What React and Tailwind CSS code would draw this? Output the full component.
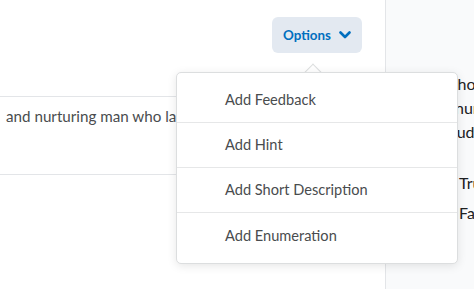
import React from 'react'

const items = ['Add Feedback', 'Add Hint', 'Add Short Description', 'Add Enumeration']

const Chevron = () => (
  <svg width="12" height="8" viewBox="0 0 12 8" fill="none">
    <path d="M1.5 1.5 L6 6 L10.5 1.5" stroke="#006fbf" strokeWidth="2.6" strokeLinecap="round" strokeLinejoin="round" />
  </svg>
)

const OptionsMenu = () => (
  <div className="absolute left-[176px] top-[72px] w-[282px]">
    {/* arrow */}
    <div className="absolute left-[131px] top-[-6px] w-[12px] h-[12px] rotate-45 bg-white border-l border-t border-[#dcdedf]" />
    <div className="relative rounded-[5px] bg-white border border-[#dcdedf] shadow-[0_2px_10px_rgba(0,0,0,0.10)] py-[5px]">
      {items.map((item, i) => (
        <div
          key={item}
          className={`h-[45px] flex items-center pl-[48px] text-[14.6px] text-[#494c4e] ${i < items.length - 1 ? 'border-b border-[#e6e7e8]' : ''}`}
        >
          {item}
        </div>
      ))}
    </div>
  </div>
)

export default function App() {
  return (
    <div className="relative w-[474px] h-[289px] overflow-hidden flex bg-white font-['Lato','Liberation_Sans',sans-serif]">
      {/* main column */}
      <div className="w-[386px] shrink-0 border-r border-[#e3e5e8] bg-white">
        <div className="flex justify-end pr-[23px] pt-[17px]">
          <button className="h-[36px] w-[90px] rounded-[6px] bg-[#e3e9f1] flex items-center justify-center gap-[8px] text-[13.4px] font-bold text-[#006fbf]">
            Options
            <Chevron />
          </button>
        </div>
        <div className="mt-[43px] h-[79px] border-y border-[#e3e5e8] pt-[8px] pl-[6px] text-[15.2px] text-[#494c4e] whitespace-nowrap">
          and nurturing man who lavished attention
        </div>
      </div>
      {/* side panel */}
      <div className="flex-1 bg-[#f9fafb] overflow-hidden pt-[72px] text-[16px] text-[#202122] whitespace-nowrap">
        <div className="leading-[24px] ml-[59px]">who</div>
        <div className="leading-[24px] ml-[69px]">nurturing</div>
        <div className="leading-[24px] ml-[58px]">student</div>
        <div className="leading-[30px] mt-[24px] ml-[73px]">True</div>
        <div className="leading-[30px] ml-[73px]">False</div>
      </div>
      <OptionsMenu />
    </div>
  )
}
